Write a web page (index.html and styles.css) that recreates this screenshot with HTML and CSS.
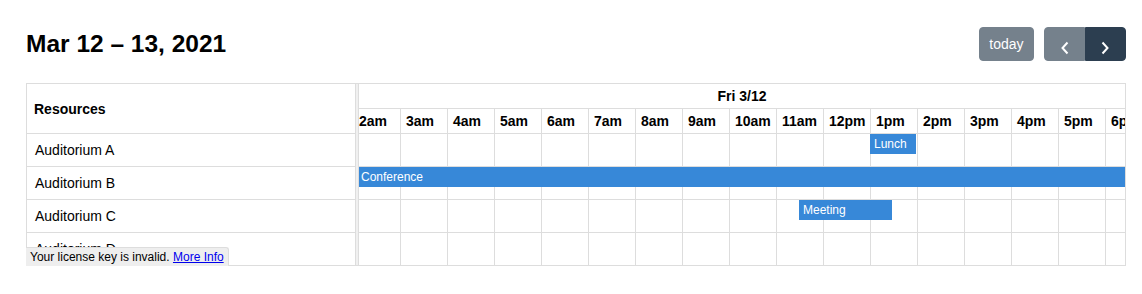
FILE: index.html
```html
<!DOCTYPE html>
<html>
<head>
<meta charset="utf-8">
<link rel="stylesheet" href="styles.css">
</head>
<body>
<div class="app">
  <div class="toolbar">
    <h2 class="title">Mar 12 – 13, 2021</h2>
    <div class="tools">
      <button class="btn btn-disabled">today</button>
      <div class="btn-group">
        <button class="btn btn-icon btn-disabled" aria-label="prev">
          <svg width="21" height="21" viewBox="0 0 21 21"><path d="M13.5 8.5 L8.5 14 L13.5 19.5" fill="none" stroke="#fff" stroke-width="2"/></svg>
        </button>
        <button class="btn btn-icon" aria-label="next">
          <svg width="21" height="21" viewBox="0 0 21 21"><path d="M7.5 8.5 L12.5 14 L7.5 19.5" fill="none" stroke="#fff" stroke-width="2"/></svg>
        </button>
      </div>
    </div>
  </div>

  <div class="cal-wrap">
    <div class="cal">
      <div class="res-area">
        <div class="res-head">Resources</div>
        <div class="res-row">Auditorium A</div>
        <div class="res-row">Auditorium B</div>
        <div class="res-row">Auditorium C</div>
        <div class="res-row">Auditorium D</div>
      </div>
      <div class="divider"></div>
      <div class="time-area">
        <div class="day-head">Fri 3/12</div>
        <div class="slot-head">
          <div class="slot-track">
            <div class="slot">2am</div>
            <div class="slot">3am</div>
            <div class="slot">4am</div>
            <div class="slot">5am</div>
            <div class="slot">6am</div>
            <div class="slot">7am</div>
            <div class="slot">8am</div>
            <div class="slot">9am</div>
            <div class="slot">10am</div>
            <div class="slot">11am</div>
            <div class="slot">12pm</div>
            <div class="slot">1pm</div>
            <div class="slot">2pm</div>
            <div class="slot">3pm</div>
            <div class="slot">4pm</div>
            <div class="slot">5pm</div>
            <div class="slot">6pm</div>
          </div>
        </div>
        <div class="time-body">
          <div class="lane">
            <div class="event" style="left:511px;width:46px"><span>Lunch</span></div>
          </div>
          <div class="lane">
            <div class="event" style="left:-2px;width:768px"><span>Conference</span></div>
          </div>
          <div class="lane">
            <div class="event" style="left:440px;width:93px"><span>Meeting</span></div>
          </div>
          <div class="lane"></div>
        </div>
      </div>
    </div>
    <div class="license">Your license key is invalid. <a href="#">More Info</a></div>
  </div>
</div>
</body>
</html>
```

FILE: styles.css
```css
body {
  margin: 0;
  font-family: "Liberation Sans", Arial, sans-serif;
  font-size: 14px;
  color: #000;
  background: #fff;
}

.app {
  width: 1100px;
  padding: 27px 0 0 26px;
}

.toolbar {
  display: flex;
  justify-content: space-between;
  align-items: center;
  height: 34px;
  margin-bottom: 22px;
}

.title {
  margin: 0;
  font-size: 24.5px;
  font-weight: bold;
  line-height: 1.2;
}

.tools {
  display: flex;
  align-items: center;
  gap: 10px;
}

.btn {
  font-family: inherit;
  font-size: 14px;
  line-height: 21px;
  height: 34px;
  box-sizing: border-box;
  padding: 5.6px 9.1px;
  border: 1px solid #2c3e50;
  background: #2c3e50;
  color: #fff;
  border-radius: 4px;
  display: inline-flex;
  align-items: center;
  justify-content: center;
}

.btn-disabled {
  opacity: 0.65;
}

.btn-icon {
  padding: 5.6px 9.1px;
}

.btn-icon svg {
  display: block;
}

.btn-group {
  display: flex;
}

.btn-group .btn:first-child {
  border-radius: 4px 0 0 4px;
}

.btn-group .btn:last-child {
  border-radius: 0 4px 4px 0;
}

.cal-wrap {
  position: relative;
}

.cal {
  display: flex;
  border: 1px solid #ddd;
}

.res-area {
  width: 328px;
  flex: none;
}

.res-head {
  height: 49px;
  border-bottom: 1px solid #ddd;
  display: flex;
  align-items: center;
  padding-left: 7px;
  font-weight: bold;
}

.res-row {
  height: 32px;
  border-bottom: 1px solid #ddd;
  display: flex;
  align-items: center;
  padding-left: 8px;
}

.res-row:last-child {
  border-bottom: none;
}

.divider {
  width: 2px;
  flex: none;
  border-left: 1px solid #ddd;
  border-right: 1px solid #ddd;
  background: #f0f0f0;
}

.time-area {
  flex: 1;
  min-width: 0;
  overflow: hidden;
}

.day-head {
  height: 24px;
  line-height: 24px;
  text-align: center;
  font-weight: bold;
  border-bottom: 1px solid #ddd;
}

.slot-head {
  height: 24px;
  border-bottom: 1px solid #ddd;
  overflow: hidden;
}

.slot-track {
  display: flex;
  margin-left: -6px;
}

.slot {
  flex: none;
  width: 47px;
  box-sizing: border-box;
  border-left: 1px solid #ddd;
  padding-left: 5px;
  line-height: 24px;
  font-weight: bold;
  white-space: nowrap;
}

.time-body {
  background-image: linear-gradient(to right, #ddd 0, #ddd 1px, transparent 1px);
  background-size: 47px 100%;
  background-position: 41px 0;
}

.lane {
  height: 32px;
  border-bottom: 1px solid #ddd;
  position: relative;
}

.lane:last-child {
  border-bottom: none;
}

.event {
  position: absolute;
  top: 0;
  height: 20px;
  box-sizing: border-box;
  background: #3788d8;
  border: 1px solid #3788d8;
  color: #fff;
  font-size: 12px;
  line-height: 14px;
  padding: 2px 1px;
  white-space: nowrap;
  overflow: hidden;
}

.event span {
  padding: 0 2px;
}

.license {
  position: absolute;
  left: 0;
  bottom: 0;
  background: #eee;
  border-style: solid;
  border-color: #ddd;
  border-width: 1px 1px 0 0;
  border-top-right-radius: 3px;
  padding: 2px 4px;
  font-size: 12px;
  line-height: 14px;
}

.license a {
  color: #0000ee;
}
```
